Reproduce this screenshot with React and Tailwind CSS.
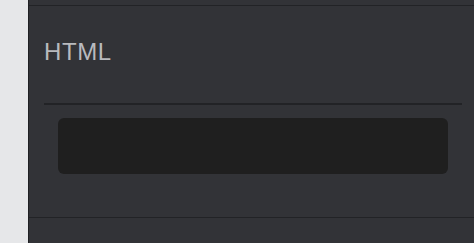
export default function App() {
  return (
    <div className="flex h-screen w-full overflow-hidden" style={{ fontFamily: '"Liberation Sans", Arial, sans-serif' }}>
      {/* left strip */}
      <div className="w-[28px] shrink-0 bg-[#e6e7e9]" />

      {/* panel */}
      <div className="flex-1 flex flex-col bg-[#323337] border-l border-[#1f2023]">
        <div className="h-[5px] shrink-0" />
        <div className="border-t border-[#222326]" />

        <div className="pl-[15px] pr-[12px] pt-[32px]">
          <h2 className="text-[24px] leading-[28px] tracking-[0.6px] text-[#b8babe] font-normal">HTML</h2>
          <div className="mt-[37px] h-[2px] bg-[#222326]" />
          <div className="px-[14px] pt-[13px]">
            <div className="h-[56px] rounded-[6px] bg-[#1f1f1f]" />
          </div>
        </div>

        <div className="mt-[43px] border-t border-[#222326]" />
      </div>
    </div>
  )
}
